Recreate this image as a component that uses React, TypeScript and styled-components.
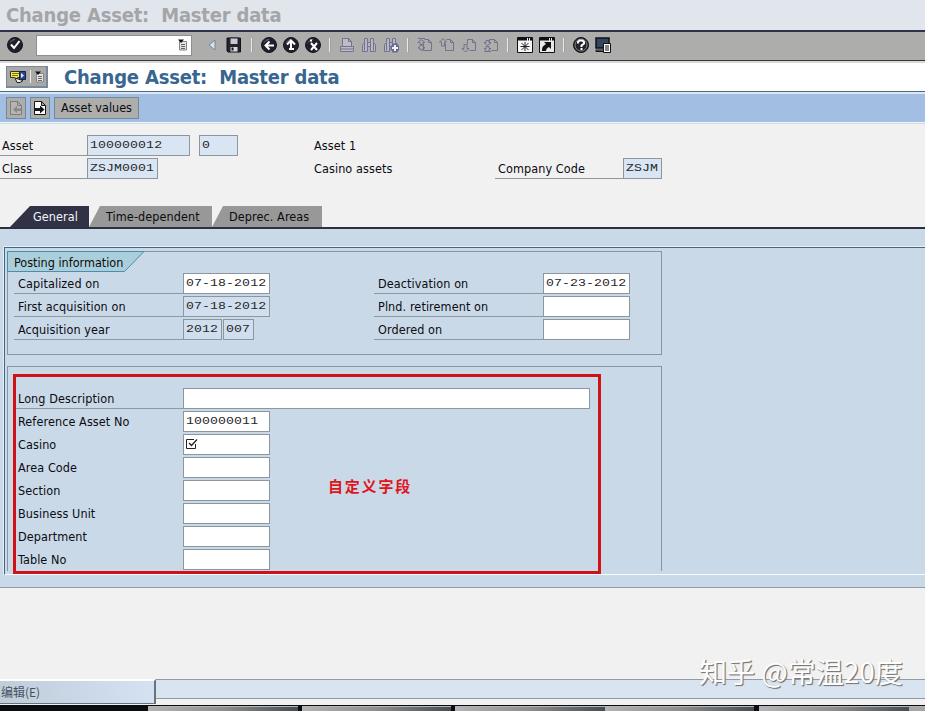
import React from "react";
import styled, { createGlobalStyle } from "styled-components";

const Global = createGlobalStyle`
  * { box-sizing: border-box; }
  body { margin: 0; background: #fff; overflow: hidden; }
`;

const sans = `"DejaVu Sans Condensed", "DejaVu Sans", sans-serif`;
const cjk = `"Noto Sans CJK SC", sans-serif`;

const Window = styled.div`
  position: relative;
  display: flex;
  flex-direction: column;
  width: 925px;
  height: 711px;
  overflow: hidden;
  background: #f1f1f1;
  font-family: ${sans};
  font-stretch: condensed;
  font-size: 12.5px;
  line-height: 16px;
  letter-spacing: 0.1px;
  color: #0b0b10;
  white-space: pre;
`;

const Title = styled.h1<{ $muted?: boolean }>`
  margin: 0;
  font-size: 20px;
  line-height: 24px;
  font-weight: bold;
  letter-spacing: -0.2px;
  color: ${(p) => (p.$muted ? "#a4a5a7" : "#37668f")};
`;

const TitleBar = styled.header`
  height: 32px;
  padding: 3px 6px 0;
  background: #e1e6ed;
  border-bottom: 2px solid #2f3148;
`;

const Toolbar = styled.div`
  display: flex;
  align-items: center;
  height: 29px;
  padding: 0 0 2px 4px;
  background: #adadab;
  border-bottom: 1px solid #37373b;
`;

const CommandField = styled.div`
  display: flex;
  align-items: center;
  justify-content: flex-end;
  width: 156px;
  height: 21px;
  margin: 0 9px 0 10px;
  padding-right: 3px;
  background: #fff;
  border: 1px solid #8f8f8f;
`;

const Slot = styled.div<{ $dim?: boolean }>`
  display: flex;
  align-items: center;
  justify-content: center;
  flex: none;
  width: 22px;
  height: 22px;
  color: ${(p) => (p.$dim ? "#73738d" : "#111118")};
`;

const Divider = styled.div<{ $wide?: boolean }>`
  flex: none;
  width: 2px;
  height: 14px;
  margin: 0 5px 0 ${(p) => (p.$wide ? 6 : 5)}px;
  border-left: 1px solid #e9e9e9;
  border-right: 1px solid #a0a0a0;
`;

const ScreenHeader = styled.div`
  display: flex;
  align-items: center;
  gap: 16px;
  height: 31px;
  padding: 0 6px;
  background: #fff;
  border-top: 2px solid #d9d9d9;
  border-bottom: 1px solid #4e6c80;
`;

const MenuButton = styled.div`
  display: flex;
  align-items: center;
  gap: 3px;
  width: 42px;
  height: 22px;
  padding-left: 2px;
  background: #a9a9a8;
  border: 1px solid #78899b;
  border-right-width: 2px;
  border-bottom-width: 2px;

  svg { flex: none; }
`;

const MenuRule = styled.div`
  width: 1px;
  height: 13px;
  background: #eee;
`;

const ActionBar = styled.div`
  display: flex;
  gap: 4px;
  height: 31px;
  padding: 3px 6px 0;
  background: #a2bfe3;
  border-top: 2px solid #dbe7f4;
  border-bottom: 1px solid #eef4f8;
`;

const IconButton = styled.div`
  display: flex;
  align-items: center;
  justify-content: center;
  width: 20px;
  height: 22px;
  background: #adadab;
  border: 1px solid #75879a;
`;

const TextButton = styled(IconButton)`
  width: 85px;
  letter-spacing: 0;
`;

const AssetHeader = styled.section`
  display: grid;
  grid-template-columns: 314px 181px 1fr;
  grid-auto-rows: 23px;
  height: 83px;
  padding-top: 11px;
  border-top: 1px solid #cbdde9;
`;

const Row = styled.div`
  display: flex;
  align-items: flex-start;
  height: 23px;
`;

const Label = styled.div<{ $width: number; $pad?: number; $plain?: boolean }>`
  flex: none;
  width: ${(p) => p.$width}px;
  height: 21px;
  padding: 3px 0 0 ${(p) => p.$pad ?? 4}px;
  border-bottom: 1px solid ${(p) => (p.$plain ? "transparent" : "#8f979f")};
`;

const Caption = styled.div`
  padding-top: 3px;
`;

const FieldBox = styled.div<{ $width: number; $tone?: "edit" | "read" | "header"; $gap?: number }>`
  flex: none;
  display: flex;
  align-items: center;
  width: ${(p) => p.$width}px;
  height: 21px;
  margin-right: ${(p) => p.$gap ?? 0}px;
  padding: 0 0 1px 2px;
  border: 1px solid #8b969f;
  background: ${(p) =>
    p.$tone === "read" ? "#d0deed" : p.$tone === "header" ? "#d9e5f3" : "#fff"};
`;

const FieldText = styled.span`
  font-family: "Liberation Mono", monospace;
  font-size: 11px;
  letter-spacing: 0.08px;
  color: #26282c;
  transform: scaleX(1.2);
  transform-origin: left;
`;

const TabStrip = styled.nav`
  display: flex;
  align-items: flex-end;
  height: 21px;
  padding-left: 10px;
`;

const Tab = styled.div<{ $active?: boolean; $width: number; $pad: number }>`
  width: ${(p) => p.$width}px;
  height: 21px;
  padding: 3px 0 0 ${(p) => p.$pad}px;
  clip-path: polygon(0 100%, ${(p) => (p.$active ? "20px" : "11px")} 0, 100% 0, 100% 100%);
  background: ${(p) => (p.$active ? "#323247" : "#989898")};
  color: ${(p) => (p.$active ? "#f5f5f8" : "#0b0b10")};
`;

const TabPanel = styled.main`
  height: 361px;
  padding: 18px 0 0 4px;
  border-top: 2px solid #2f2f42;
  border-bottom: 1px solid #8f9ba9;
  background: #cad9e8;
`;

const Scroller = styled.div`
  height: 328px;
  padding: 3px 0 0 2px;
  border-top: 1px solid #426683;
  border-left: 1px solid #426683;
  border-bottom: 1px solid #f8fbff;
  box-shadow: 0 -1px 0 #e8f1f8, -1px 0 0 #e4eef5;
`;

const PostingGroup = styled.section`
  width: 655px;
  height: 104px;
  border: 1px solid #8796a4;
`;

const GroupTitle = styled.div`
  position: relative;
  width: 138px;
  height: 21px;
  margin: -1px 0 0 -1px;
  padding: 4px 0 0 7px;
  letter-spacing: 0;
`;

const GroupTitleShape = styled.svg`
  position: absolute;
  inset: 0;
  z-index: 0;
`;

const GroupTitleText = styled.span`
  position: relative;
`;

const PostingGrid = styled.div`
  display: grid;
  grid-template-columns: 360px 1fr;
  padding: 1px 0 0 6px;
`;

const CustomGroup = styled.section`
  position: relative;
  width: 655px;
  height: 205px;
  margin-top: 11px;
  padding: 21px 0 0 6px;
  border: 1px solid #8796a4;
  border-bottom: 0;
`;

const Highlight = styled.div`
  position: absolute;
  left: 5px;
  top: 7px;
  width: 588px;
  height: 200px;
  border: 3px solid #cf1218;
`;

const Note = styled.div`
  position: absolute;
  left: 312px;
  top: 99px;
  font-family: ${cjk};
  font-weight: bold;
  font-size: 15px;
  line-height: 20px;
  letter-spacing: 1.8px;
  color: #e0151c;
`;

const Footer = styled.footer`
  display: flex;
  flex-direction: column;
  height: 32px;
  margin-top: auto;
`;

const StatusRow = styled.div`
  display: flex;
  height: 27px;
  border-bottom: 1px solid #070b10;
`;

const StatusBar = styled.div`
  flex: 1;
  height: 20px;
  background: #d9e4f1;
  border-top: 1px solid #929aa4;
  border-bottom: 1px solid #929aa4;
`;

const MenuHint = styled.div`
  width: 156px;
  height: 25px;
  padding: 2px 0 0 1px;
  background: linear-gradient(90deg, #bfccda, #d5e2f2);
  border-top: 2px solid #fff;
  border-right: 2px solid #69737b;
  border-bottom: 1px solid #69737b;
  font-family: ${cjk};
  font-size: 12px;
  line-height: 18px;
  letter-spacing: 0;
  color: #45525d;
`;

const Taskbar = styled.div`
  display: flex;
  height: 5px;
  padding-left: 148px;
  background: #090d13;
`;

const Task = styled.div<{ $width: number; $gap?: number; $flat?: boolean }>`
  width: ${(p) => p.$width}px;
  margin-right: ${(p) => p.$gap ?? 0}px;
  background: ${(p) => (p.$flat ? "#a6a6a6" : "linear-gradient(90deg, #b5b3b4 0%, #8e8e8e 50%, #454e52 100%)")};
  border-top: 1px solid #b5b5b5;
`;

const Watermark = styled.div`
  position: absolute;
  left: 699px;
  top: 653px;
  font-family: ${cjk};
  font-size: 28px;
  line-height: 36px;
  letter-spacing: 0;
  color: #fdfdfd;
  text-shadow: 1px 1px 1px #777, 1px 1px 0 #999;
`;

const Svg = ({ children }: { children: React.ReactNode }) => (
  <svg width="16" height="16" viewBox="0 0 16 16" fill="none" stroke="currentColor">
    {children}
  </svg>
);

const Disc = ({ d }: { d: string }) => (
  <Svg>
    <circle cx="8" cy="8" r="7.5" fill="#20202b" stroke="#17171f" />
    <path d="M3 5.5 Q5 2.5 8 2.5" stroke="#73738a" />
    <path d={d} stroke="#fff" strokeWidth="2" />
  </Svg>
);

const List = () => (
  <svg width="11" height="14" viewBox="0 0 11 14">
    <path d="M2.500 3.500h7v8.500h-7z" fill="#e4e4e4" stroke="#858585" />
    <path d="M1 1.500h6L4 5z" fill="#111" />
    <path d="M4 6.500h4M4 8.500h4M4 10.500h4" stroke="#666" />
  </svg>
);

const Save = () => (
  <Svg>
    <path d="M1 1h13.500v14H2l-1-1z" fill="#25252e" />
    <path d="M4 1h8v6.500H4z" fill="#c9c9cf" stroke="#25252e" />
    <path d="M4.5 10h7v4.500h-7z" fill="#d9d9dd" stroke="none" />
    <path d="M6.500 10.500v3" strokeWidth="2" />
  </Svg>
);

const Printer = () => (
  <Svg>
    <path d="M3.5 9.5v-8h6l3 3v5M9.5 1.5v3h3" fill="#bdbdc9" />
    <path d="M1.5 9.5h13v5h-13zM2 12h12" fill="#bcbcc8" />
  </Svg>
);

const Binoculars = ({ plus }: { plus?: boolean }) => (
  <Svg>
    <path d="M3.5 1.5h3v4h3v-4h3v4l2 2v7h-5v-5h-3v5h-5v-7l2-2zM6.5 5.5v4M9.5 5.5v4M3.5 5.5v8M12.5 5.5v8" fill="#b7b7c4" />
    {plus && (
      <>
        <path d="M12 6.5v9M7.5 11h9" stroke="#68689a" strokeWidth="5" />
        <path d="M12 8v6M9 11h6" stroke="#f2f2f6" strokeWidth="2" />
      </>
    )}
  </Svg>
);

const PageTurn = ({ kind }: { kind: "first" | "up" | "down" | "last" }) => (
  <Svg>
    <path d={kind === "first" || kind === "up" ? "M6.5 6.5v7h8v-8l-3-3h-4M11.5 2.5v3h3" : "M6.5 7V2.5h5l3 3v8h-6M11.5 2.5v3h3"} />
    {kind === "first" && <path d="M1 1.500h7M4 2.500l-3 3h2v2h3v-2h2zM4 8l-3 3h2v2h3v-2h2z" />}
    {kind === "up" && <path d="M4 1.5l-3.500 3.500h2v4h3v-4h2z" />}
    {kind === "down" && <path d="M3 7.500h3v4h2l-3.500 3.500-3.500-3.500h2z" />}
    {kind === "last" && <path d="M3 3.500h3v2h2l-3.500 3-3.500-3h2zM3 9.500h3v2h2l-3.500 3-3.500-3h2zM1 14.500h7" />}
  </Svg>
);

const NewSession = () => (
  <Svg>
    <path d="M.5.500h15v15H.500z" fill="#f5f5f5" stroke="#111" />
    <path d="M1 2h14" strokeWidth="3" strokeDasharray="9 1 1 1" />
    <path d="M8 5v9M3.500 9.500h9M4.500 6l7 7M11.500 6l-7 7" strokeWidth="0.9" />
  </Svg>
);

const Shortcut = () => (
  <Svg>
    <path d="M.5.500h15v15H.500z" fill="#e9e9ec" stroke="#111" />
    <path d="M1 2h14" strokeWidth="3" strokeDasharray="9 1 1 1" />
    <path d="M5 5h7v7l-2-2c-2 1-3 2-3 4H3c0-4 1-5 4-7z" fill="#111" stroke="none" />
  </Svg>
);

const Help = () => (
  <Svg>
    <circle cx="8" cy="8" r="7.5" fill="#22222c" />
    <circle cx="8" cy="8" r="6" stroke="#aaa" strokeWidth=".7" />
    <path d="M5 6.500V5l1.500-1.500h3L11 5v1.500L8.500 8.500v1.500M8.500 11v2" stroke="#fff" strokeWidth="2" />
  </Svg>
);

const Monitor = () => (
  <Svg>
    <path d="M1 1h13v10H1z" fill="#34455e" strokeWidth="1.500" />
    <path d="M1 13h9v1.500H1z" fill="#999" />
    <path d="M8.500 6.500h7v9h-7z" fill="#fff" />
    <path d="M10 9h4M10 11h4M10 13h4" />
  </Svg>
);

const PageArrow = ({ back }: { back?: boolean }) => (
  <svg width="14" height="16" viewBox="0 0 14 16">
    <path
      d={back ? "M1.500 1.500h7l4 4v9h-11zM8.500 1.500v4h4" : "M1.500 1.500h7l4 4v9h-11zM8.500 1.500v4h4"}
      fill={back ? "#b5b5b5" : "#fff"}
      stroke={back ? "#7d7d7d" : "#15151b"}
    />
    <path
      d={back ? "M12 8.500H8V6L4 9.500 8 13v-2h4z" : "M2 8h5V5.500L11.500 9.500 7 13.500V11H2z"}
      fill={back ? "#888" : "#15151b"}
    />
  </svg>
);

const ServiceIcon = () => (
  <svg width="18" height="16" viewBox="0 0 18 16">
    <path d="M1.500 2.500h10v6h-3v3l-3-3h-4z" fill="#f5eb38" stroke="#333" />
    <path d="M3 4.500h7M3 6.500h6" stroke="#777216" />
    <path d="M10.500 2.500h6v8h-6z" fill="#2b4792" stroke="#14204b" />
    <path d="M12 4v5l3-2.500z" fill="#e2eafb" />
    <path d="M6 9l2 4.500h3l3-2-5-1.500z" fill="#eee" stroke="#222" />
  </svg>
);

const CheckBox = () => (
  <svg width="12" height="12" viewBox="0 0 12 12" fill="none" stroke="#222">
    <path d="M8 1.500H.500v9h9V6" />
    <path d="M3 5l2.500 2.500 5.500-6" strokeWidth="1.300" />
  </svg>
);

type FieldProps = {
  $width: number;
  $tone?: "edit" | "read" | "header";
  $gap?: number;
  value?: string;
  children?: React.ReactNode;
};

const Field = ({ value, children, ...box }: FieldProps) => (
  <FieldBox {...box}>
    {value && <FieldText>{value}</FieldText>}
    {children}
  </FieldBox>
);

const customRows = ["Casino", "Area Code", "Section", "Business Unit", "Department", "Table No"];

export default function App() {
  return (
    <Window>
      <Global />
      <TitleBar>
        <Title $muted>Change Asset:  Master data</Title>
      </TitleBar>
      <Toolbar>
        <Slot><Disc d="M4 7.500l3 3.500 5.500-7" /></Slot>
        <CommandField><List /></CommandField>
        <Slot>
          <svg width="8" height="12"><path d="M7 1v10L1 6z" fill="#d4e3ed" stroke="#71899a" /></svg>
        </Slot>
        <Slot><Save /></Slot>
        <Divider $wide />
        <Slot><Disc d="M13 8.500H5M8.500 4.500l-4 4 4 4" /></Slot>
        <Slot><Disc d="M4 7.500l4-4 4 4M8 5v7M6 12h5" /></Slot>
        <Slot><Disc d="M6 6l6 7M12 6l-6 7M5 3.500h2" /></Slot>
        <Divider />
        <Slot $dim><Printer /></Slot>
        <Slot $dim><Binoculars /></Slot>
        <Slot $dim><Binoculars plus /></Slot>
        <Divider />
        <Slot $dim><PageTurn kind="first" /></Slot>
        <Slot $dim><PageTurn kind="up" /></Slot>
        <Slot $dim><PageTurn kind="down" /></Slot>
        <Slot $dim><PageTurn kind="last" /></Slot>
        <Divider />
        <Slot><NewSession /></Slot>
        <Slot><Shortcut /></Slot>
        <Divider />
        <Slot><Help /></Slot>
        <Slot><Monitor /></Slot>
      </Toolbar>
      <ScreenHeader>
        <MenuButton><ServiceIcon /><MenuRule /><List /></MenuButton>
        <Title>Change Asset:  Master data</Title>
      </ScreenHeader>
      <ActionBar>
        <IconButton><PageArrow back /></IconButton>
        <IconButton><PageArrow /></IconButton>
        <TextButton>Asset values</TextButton>
      </ActionBar>
      <AssetHeader>
        <Row>
          <Label $width={87} $pad={2}>Asset</Label>
          <Field $width={103} $tone="header" $gap={9} value="100000012" />
          <Field $width={39} $tone="header" value="0" />
        </Row>
        <Caption>Asset 1</Caption>
        <div />
        <Row>
          <Label $width={87} $pad={2}>Class</Label>
          <Field $width={71} $tone="header" value="ZSJM0001" />
        </Row>
        <Caption>Casino assets</Caption>
        <Row>
          <Label $width={128} $pad={3}>Company Code</Label>
          <Field $width={39} $tone="header" value="ZSJM" />
        </Row>
      </AssetHeader>
      <TabStrip>
        <Tab $active $width={79} $pad={23}>General</Tab>
        <Tab $width={123} $pad={17}>Time-dependent</Tab>
        <Tab $width={110} $pad={17}>Deprec. Areas</Tab>
      </TabStrip>
      <TabPanel>
        <Scroller>
          <PostingGroup>
            <GroupTitle>
              <GroupTitleShape width="138" height="21">
                <path d="M.5.500h136.500L117.500 20.500H.500z" fill="#aacfda" stroke="#4d8caf" />
              </GroupTitleShape>
              <GroupTitleText>Posting information</GroupTitleText>
            </GroupTitle>
            <PostingGrid>
              <Row><Label $width={169}>Capitalized on</Label><Field $width={87} value="07-18-2012" /></Row>
              <Row><Label $width={169}>Deactivation on</Label><Field $width={87} value="07-23-2012" /></Row>
              <Row>
                <Label $width={169}>First acquisition on</Label>
                <Field $width={87} $tone="read" value="07-18-2012" />
              </Row>
              <Row><Label $width={169}>Plnd. retirement on</Label><Field $width={87} /></Row>
              <Row>
                <Label $width={169}>Acquisition year</Label>
                <Field $width={39} $tone="read" $gap={1} value="2012" />
                <Field $width={31} $tone="read" value="007" />
              </Row>
              <Row><Label $width={169}>Ordered on</Label><Field $width={87} /></Row>
            </PostingGrid>
          </PostingGroup>
          <CustomGroup>
            <Row><Label $width={169}>Long Description</Label><Field $width={407} /></Row>
            <Row><Label $plain $width={169}>Reference Asset No</Label><Field $width={87} value="100000011" /></Row>
            {customRows.map((name) => (
              <Row key={name}>
                <Label $plain $width={169}>{name}</Label>
                <Field $width={87}>{name === "Casino" && <CheckBox />}</Field>
              </Row>
            ))}
            <Highlight><Note>自定义字段</Note></Highlight>
          </CustomGroup>
        </Scroller>
      </TabPanel>
      <Footer>
        <StatusRow>
          <MenuHint>编辑(E)</MenuHint>
          <StatusBar />
        </StatusRow>
        <Taskbar>
          <Task $width={150} $gap={4} />
          <Task $width={149} $gap={4} />
          <Task $width={150} />
          <Task $width={149} $gap={5} />
          <Task $width={150} />
          <Task $width={16} $flat />
        </Taskbar>
      </Footer>
      <Watermark>知乎 @常温20度</Watermark>
    </Window>
  );
}
